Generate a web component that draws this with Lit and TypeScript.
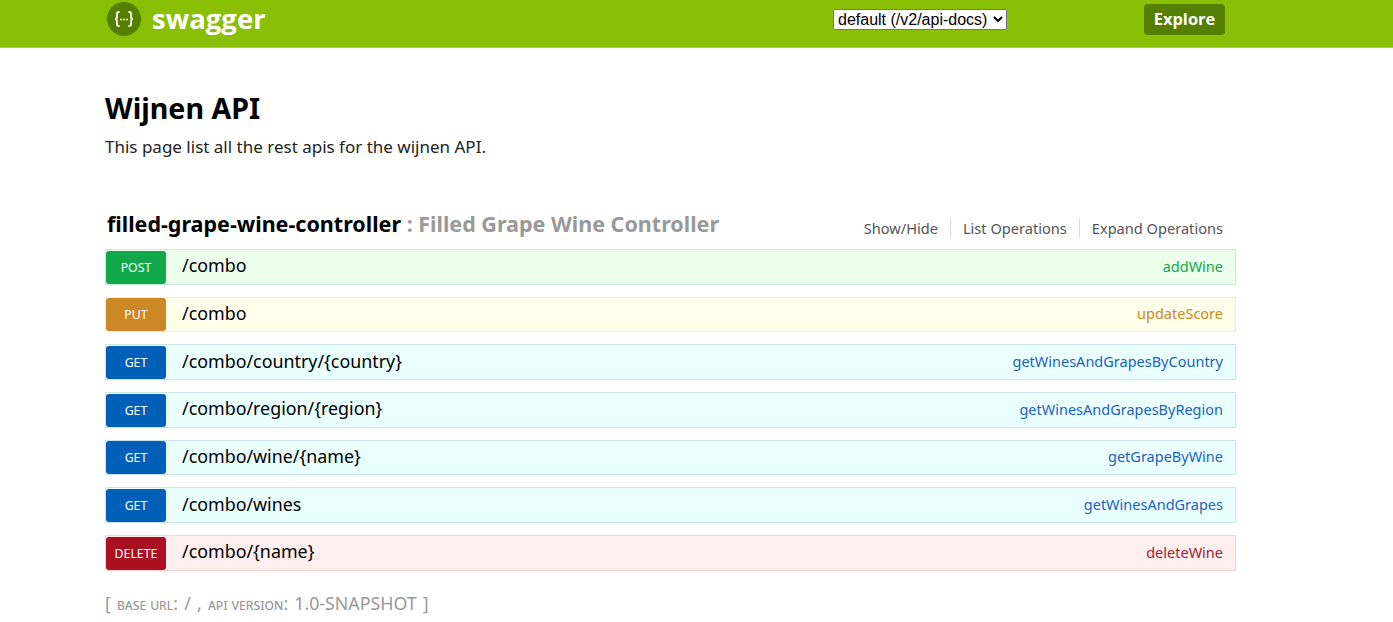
import { LitElement, html, css } from 'lit';
import { customElement } from 'lit/decorators.js';

interface Operation {
  method: string;
  path: string;
  name: string;
}

const OPERATIONS: Operation[] = [
  { method: 'post', path: '/combo', name: 'addWine' },
  { method: 'put', path: '/combo', name: 'updateScore' },
  { method: 'get', path: '/combo/country/{country}', name: 'getWinesAndGrapesByCountry' },
  { method: 'get', path: '/combo/region/{region}', name: 'getWinesAndGrapesByRegion' },
  { method: 'get', path: '/combo/wine/{name}', name: 'getGrapeByWine' },
  { method: 'get', path: '/combo/wines', name: 'getWinesAndGrapes' },
  { method: 'delete', path: '/combo/{name}', name: 'deleteWine' },
];

@customElement('app-root')
export class AppRoot extends LitElement {
  static styles = css`
    :host {
      display: block;
      font-family: 'Noto Sans', 'Open Sans', sans-serif;
      color: #000;
      height: 622px;
      overflow: hidden;
      background: #fff;
    }

    .header {
      display: flex;
      align-items: flex-start;
      height: 47px;
      background: #89bf04;
      border-bottom: 1px solid #a5cf3c;
      padding-left: 107px;
      padding-right: 168px;
    }

    .logo {
      display: flex;
      align-items: center;
      flex: none;
      width: 726px;
      height: 38px;
      gap: 11px;
    }

    .logo svg {
      display: block;
    }

    .logo-text {
      font-family: 'Open Sans', sans-serif;
      font-weight: 700;
      font-size: 27.5px;
      line-height: 38px;
      color: #fff;
    }

    .url-select {
      flex: none;
      margin-top: 9px;
      width: 174px;
      height: 21px;
      font-family: 'Liberation Sans', Arial, sans-serif;
      font-size: 16px;
      background: #fff;
      color: #000;
      border: 1px solid #767676;
      border-radius: 2px;
      padding: 0;
    }

    .explore {
      margin-left: auto;
      margin-top: 4px;
      width: 81px;
      height: 31px;
      background: #547f00;
      border-radius: 4px;
      color: #fff;
      font-family: 'Open Sans', sans-serif;
      font-weight: 700;
      font-size: 16.5px;
      line-height: 30px;
      text-align: center;
    }

    .content {
      width: 1131px;
      margin-left: 105px;
    }

    h1 {
      margin: 0;
      padding-top: 40px;
      font-size: 28.6px;
      line-height: 40px;
      font-weight: 700;
    }

    .description {
      margin: 0;
      padding-top: 7px;
      font-size: 17px;
      line-height: 24px;
      color: #222;
    }

    .resource-head {
      display: flex;
      align-items: flex-end;
      justify-content: space-between;
      margin-top: 48px;
      height: 36px;
      padding-right: 13px;
      padding-left: 2px;
    }

    h2 {
      margin: 0;
      font-size: 21.5px;
      line-height: 30px;
      font-weight: 700;
      color: #000;
      padding-bottom: 4px;
    }

    h2 span {
      color: #999;
    }

    .actions {
      display: flex;
      list-style: none;
      margin: 0;
      padding: 0 0 5px;
      font-size: 14.6px;
      line-height: 20px;
      color: #555;
    }

    .actions li {
      padding: 0 12px;
      border-right: 1px solid #ddd;
    }

    .actions li:last-child {
      padding-right: 0;
      border-right: none;
    }

    .operations {
      display: flex;
      flex-direction: column;
      gap: 12px;
      padding-top: 6px;
    }

    .op {
      display: flex;
      align-items: center;
      box-sizing: border-box;
      height: 35.67px;
      border: 1px solid;
      padding-right: 12px;
    }

    .badge {
      box-sizing: border-box;
      width: 60px;
      height: 33px;
      margin-top: 1px;
      border-radius: 3px;
      color: #fff;
      font-size: 12.3px;
      line-height: 33px;
      text-align: center;
      text-transform: uppercase;
    }

    .path {
      flex: 1;
      margin-left: 16px;
      font-size: 17.85px;
      line-height: 24px;
      margin-top: -3px;
      color: #000;
    }

    .name {
      font-size: 14.5px;
      margin-top: -2px;
    }

    .post { background: #ecffed; border-color: #c9ecd8; }
    .post .badge { background: #10a84a; }
    .post .name { color: #10a84a; }

    .put { background: #fffeeb; border-color: #fde8cc; }
    .put .badge { background: #cc8824; }
    .put .name { color: #cc8824; }

    .get { background: #eaffff; border-color: #c8e4ee; }
    .get .badge { background: #0060b8; }
    .get .name { color: #1f5fc0; }

    .delete { background: #ffeeee; border-color: #f3d3d3; }
    .delete .badge { background: #aa0f22; }
    .delete .name { color: #a2202e; }

    .footer {
      margin: 0;
      padding-top: 20px;
      font-size: 17.8px;
      line-height: 24px;
      word-spacing: 1.5px;
      color: #999;
    }

    .footer small {
      font-size: 15px;
      font-variant: small-caps;
      text-transform: lowercase;
      word-spacing: 0;
    }
  `;

  render() {
    return html`
      <div class="header">
        <div class="logo">
          <svg width="34" height="34" viewBox="0 0 34 34">
            <circle cx="17" cy="17" r="17" fill="#547f00"></circle>
            <path
              d="M12.5 10h-.6q-2 0-2 2v2.8q0 2.2-1.9 2.2q1.9 0 1.9 2.2V22q0 2 2 2h.6M21.5 10h.6q2 0 2 2v2.8q0 2.2 1.9 2.2q-1.9 0-1.9 2.2V22q0 2-2 2h-.6"
              fill="none"
              stroke="#fff"
              stroke-width="1.8"
            ></path>
            <circle cx="14" cy="17.5" r="1" fill="#fff"></circle>
            <circle cx="17" cy="17.5" r="1" fill="#fff"></circle>
            <circle cx="20" cy="17.5" r="1" fill="#fff"></circle>
          </svg>
          <span class="logo-text">swagger</span>
        </div>
        <select class="url-select">
          <option>default (/v2/api-docs)</option>
        </select>
        <div class="explore">Explore</div>
      </div>
      <div class="content">
        <h1>Wijnen API</h1>
        <p class="description">This page list all the rest apis for the wijnen API.</p>
        <div class="resource-head">
          <h2>filled-grape-wine-controller <span>: Filled Grape Wine Controller</span></h2>
          <ul class="actions">
            <li>Show/Hide</li>
            <li>List Operations</li>
            <li>Expand Operations</li>
          </ul>
        </div>
        <div class="operations">
          ${OPERATIONS.map(
            (op) => html`
              <div class="op ${op.method}">
                <span class="badge">${op.method}</span>
                <span class="path">${op.path}</span>
                <span class="name">${op.name}</span>
              </div>
            `
          )}
        </div>
        <p class="footer">
          [ <small>Base URL</small>: / , <small>API Version</small>: 1.0-SNAPSHOT ]
        </p>
      </div>
    `;
  }
}
